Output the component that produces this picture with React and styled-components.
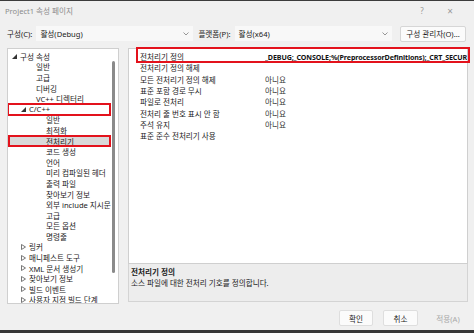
import React from "react";
import styled, { createGlobalStyle } from "styled-components";

const GlobalStyle = createGlobalStyle`
  html, body {
    margin: 0;
    padding: 0;
    background: #f0f0f0;
  }
  body {
    font-family: "Noto Sans", "Noto Sans CJK KR", sans-serif;
    color: #1b1b1b;
  }
`;

const Dialog = styled.div`
  width: 474px;
  height: 333px;
  box-sizing: border-box;
  border-top: 1px solid #3c3c3c;
  border-bottom: 3px solid #3a3a3a;
  background: #f0f0f0;
  display: flex;
  flex-direction: column;
  overflow: hidden;
  font-size: 7.6px;
  white-space: nowrap;
`;

const TitleBar = styled.div`
  height: 19px;
  flex: none;
  display: flex;
  align-items: center;
  padding: 0 10px 0 5px;
  color: #8c8c8c;
`;

const Title = styled.span`
  flex: 1;
`;

const TitleButton = styled.span`
  width: 28px;
  text-align: center;
  color: #9a9a9a;
  font-size: ${(p) => p.$size || 8}px;
`;

const ConfigRow = styled.div`
  height: 27px;
  flex: none;
  display: flex;
  align-items: center;
  padding: 0 8px 0 7px;
`;

const ConfigLabel = styled.span`
  flex: none;
  margin-right: 4px;
`;

const Combo = styled.div`
  flex: none;
  width: ${(p) => p.$w}px;
  height: 15px;
  box-sizing: border-box;
  background: #f8f8f8;
  display: flex;
  align-items: center;
  padding: 0 4px;
  margin-right: 5px;
`;

const ComboText = styled.span`
  flex: 1;
`;

const Chevron = styled.span`
  color: #9a9a9a;
  display: inline-flex;
`;

const SmallButton = styled.div`
  flex: none;
  margin-left: auto;
  height: 16px;
  width: 66px;
  box-sizing: border-box;
  border: 1px solid #d6d6d6;
  background: #fbfbfb;
  display: flex;
  align-items: center;
  justify-content: center;
  border-radius: 2px;
`;

const Body = styled.div`
  display: flex;
  padding: 1px 6px 0 7px;
  gap: 9px;
  height: 256px;
  flex: none;
`;

const TreePanel = styled.div`
  flex: none;
  width: 112px;
  box-sizing: border-box;
  background: #fff;
  border: 1px solid #cfcfcf;
  position: relative;
  padding-top: 2px;
  overflow: hidden;
`;

const ScrollThumb = styled.div`
  position: absolute;
  right: 3px;
  top: 12px;
  width: 3px;
  height: 212px;
  background: #8a8a8a;
  border-radius: 2px;
`;

const TreeRow = styled.div`
  height: 10.6px;
  display: flex;
  align-items: center;
  padding-left: ${(p) => p.$indent}px;
  position: relative;
  margin-right: ${(p) => (p.$boxed ? 8 : 0)}px;
  margin-left: ${(p) => (p.$selected ? 1 : 0)}px;
  background: ${(p) => (p.$selected ? "#d9d9d9" : "transparent")};
  outline: ${(p) => (p.$boxed ? "2px solid #e3121c" : "none")};
  outline-offset: -1px;
`;

const Arrow = styled.span`
  width: 8px;
  display: inline-flex;
  align-items: center;
`;

const RightColumn = styled.div`
  flex: 1;
  min-width: 0;
  display: flex;
  flex-direction: column;
`;

const GridPanel = styled.div`
  height: 216px;
  box-sizing: border-box;
  background: #fff;
  border: 1px solid #cfcfcf;
  padding-top: 2px;
`;

const GridRow = styled.div`
  height: 11.3px;
  display: flex;
  align-items: center;
  padding-left: 11px;
  position: relative;
  &::after {
    content: "";
    display: ${(p) => (p.$boxed ? "block" : "none")};
    position: absolute;
    left: 7px;
    right: -3px;
    top: -4px;
    bottom: -1px;
    border: 2px solid #e3121c;
  }
`;

const GridLabel = styled.span`
  width: 125px;
  flex: none;
`;

const GridValue = styled.span`
  flex: 1;
  min-width: 0;
  overflow: hidden;
  font-weight: ${(p) => (p.$bold ? 700 : 400)};
  font-size: ${(p) => (p.$bold ? 7.1 : 7.6)}px;
  letter-spacing: ${(p) => (p.$bold ? -0.1 : 0)}px;
  color: ${(p) => (p.$bold ? "#111" : "#333")};
`;

const Description = styled.div`
  height: 38px;
  box-sizing: border-box;
  border: 1px solid #d4d4d4;
  border-top: none;
  background: #ededed;
  padding: 3px 2px;
  line-height: 11px;
`;

const DescTitle = styled.div`
  font-weight: 700;
`;

const Footer = styled.div`
  display: flex;
  justify-content: flex-end;
  align-items: center;
  gap: 10px;
  padding: 6px 6px 0 0;
`;

const FooterButton = styled.div`
  width: ${(p) => p.$w}px;
  height: 16px;
  box-sizing: border-box;
  display: flex;
  align-items: center;
  justify-content: center;
  background: ${(p) => (p.$disabled ? "transparent" : "#fbfbfb")};
  border: 1px solid ${(p) => (p.$disabled ? "transparent" : "#dedede")};
  color: ${(p) => (p.$disabled ? "#a8a8a8" : "#1b1b1b")};
  border-radius: 2px;
`;

const Expanded = () => (
  <svg width="5" height="5" viewBox="0 0 5 5">
    <polygon points="5,0 5,5 0,5" fill="#333" />
  </svg>
);

const Collapsed = () => (
  <svg width="5" height="6" viewBox="0 0 5 6">
    <polygon points="0.5,0.5 4.5,3 0.5,5.5" fill="none" stroke="#555" strokeWidth="0.8" />
  </svg>
);

const ChevronIcon = () => (
  <svg width="6" height="4" viewBox="0 0 6 4">
    <polyline points="0.5,0.5 3,3 5.5,0.5" fill="none" stroke="#8a8a8a" strokeWidth="0.9" />
  </svg>
);

const tree = [
  { label: "구성 속성", indent: 12, arrow: "open" },
  { label: "일반", indent: 28 },
  { label: "고급", indent: 28 },
  { label: "디버깅", indent: 28 },
  { label: "VC++ 디렉터리", indent: 28 },
  { label: "C/C++", indent: 21, arrow: "open", boxed: true },
  { label: "일반", indent: 38 },
  { label: "최적화", indent: 38 },
  { label: "전처리기", indent: 38, selected: true },
  { label: "코드 생성", indent: 38 },
  { label: "언어", indent: 38 },
  { label: "미리 컴파일된 헤더", indent: 38 },
  { label: "출력 파일", indent: 38 },
  { label: "찾아보기 정보", indent: 38 },
  { label: "외부 include 지시문", indent: 38 },
  { label: "고급", indent: 38 },
  { label: "모든 옵션", indent: 38 },
  { label: "명령줄", indent: 38 },
  { label: "링커", indent: 21, arrow: "closed" },
  { label: "매니페스트 도구", indent: 21, arrow: "closed" },
  { label: "XML 문서 생성기", indent: 21, arrow: "closed" },
  { label: "찾아보기 정보", indent: 21, arrow: "closed" },
  { label: "빌드 이벤트", indent: 21, arrow: "closed" },
  { label: "사용자 지정 빌드 단계", indent: 21, arrow: "closed" },
];

const props = [
  { label: "전처리기 정의", value: "_DEBUG;_CONSOLE;%(PreprocessorDefinitions);_CRT_SECURE_NO_WARNINGS", bold: true, boxed: true },
  { label: "전처리기 정의 해제", value: "" },
  { label: "모든 전처리기 정의 해제", value: "아니요" },
  { label: "표준 포함 경로 무시", value: "아니요" },
  { label: "파일로 전처리", value: "아니요" },
  { label: "전처리 줄 번호 표시 안 함", value: "아니요" },
  { label: "주석 유지", value: "아니요" },
  { label: "표준 준수 전처리기 사용", value: "" },
];

const App = () => (
  <>
    <GlobalStyle />
    <Dialog>
      <TitleBar>
        <Title>Project1 속성 페이지</Title>
        <TitleButton>?</TitleButton>
        <TitleButton $size={10}>×</TitleButton>
      </TitleBar>
      <ConfigRow>
        <ConfigLabel>구성(C):</ConfigLabel>
        <Combo $w={157}>
          <ComboText>활성(Debug)</ComboText>
          <Chevron><ChevronIcon /></Chevron>
        </Combo>
        <ConfigLabel>플랫폼(P):</ConfigLabel>
        <Combo $w={157}>
          <ComboText>활성(x64)</ComboText>
          <Chevron><ChevronIcon /></Chevron>
        </Combo>
        <SmallButton>구성 관리자(O)...</SmallButton>
      </ConfigRow>
      <Body>
        <TreePanel>
          {tree.map((item, i) => (
            <TreeRow
              key={i}
              $indent={item.indent - (item.selected ? 9 : 8)}
              $selected={item.selected}
              $boxed={item.boxed || item.selected}
            >
              <Arrow>
                {item.arrow === "open" && <Expanded />}
                {item.arrow === "closed" && <Collapsed />}
              </Arrow>
              {item.label}
            </TreeRow>
          ))}
          <ScrollThumb />
        </TreePanel>
        <RightColumn>
          <GridPanel>
            {props.map((row, i) => (
              <GridRow key={i} $boxed={row.boxed}>
                <GridLabel>{row.label}</GridLabel>
                <GridValue $bold={row.bold}>{row.value}</GridValue>
              </GridRow>
            ))}
          </GridPanel>
          <Description>
            <DescTitle>전처리기 정의</DescTitle>
            <div>소스 파일에 대한 전처리 기호를 정의합니다.</div>
          </Description>
        </RightColumn>
      </Body>
      <Footer>
        <FooterButton $w={34}>확인</FooterButton>
        <FooterButton $w={35}>취소</FooterButton>
        <FooterButton $w={40} $disabled>적용(A)</FooterButton>
      </Footer>
    </Dialog>
  </>
);

export default App;
